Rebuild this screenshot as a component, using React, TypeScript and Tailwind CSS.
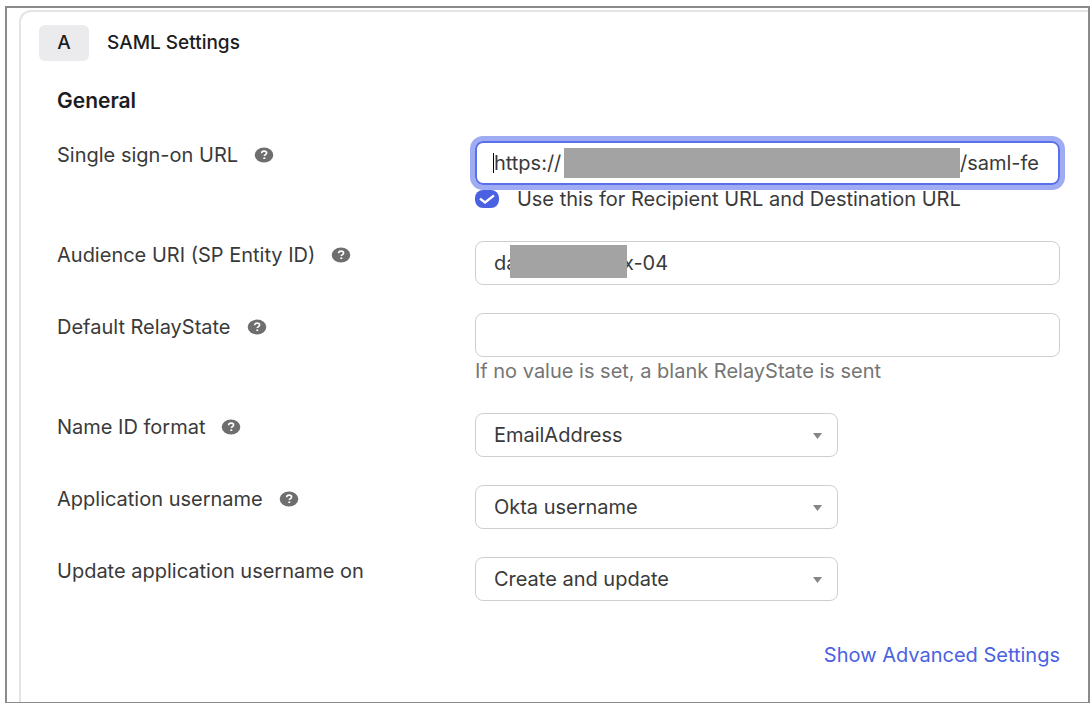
import React from 'react';

type RowProps = {
  id: string;
  label: string;
  help?: boolean;
  children: React.ReactNode;
};

const HelpIcon = () => (
  <svg className="w-5 h-4 shrink-0" viewBox="0 0 20 16" aria-hidden="true">
    <ellipse cx="10" cy="8" rx="9.3" ry="7.4" fill="#6e6e6e" />
    <path
      d="M7.6 6.2C7.7 4.8 8.7 4.1 10.1 4.1c1.5 0 2.5.8 2.5 1.9 0 1.5-2.3 1.6-2.3 3.1"
      fill="none"
      stroke="#fff"
      strokeWidth="1.6"
    />
    <ellipse cx="10.3" cy="11.2" rx="1.1" ry="0.9" fill="#fff" />
  </svg>
);

const Row = ({ id, label, help, children }: RowProps) => (
  <div className="grid grid-cols-[5fr_7fr] items-start">
    <div className="flex items-center gap-4 h-7">
      <label htmlFor={id}>{label}</label>
      {help && (
        <button type="button" aria-label={`Help: ${label}`}>
          <HelpIcon />
        </button>
      )}
    </div>
    <div>{children}</div>
  </div>
);

const Redacted = ({ className }: { className: string }) => (
  <span className={`relative z-10 bg-[#a3a3a3] ${className}`} />
);

const selects = [
  { id: 'name-id', label: 'Name ID format', help: true, value: 'EmailAddress' },
  { id: 'app-username', label: 'Application username', help: true, value: 'Okta username' },
  { id: 'update-on', label: 'Update application username on', help: false, value: 'Create and update' }
];

const App = () => {
  return (
    <main className="min-h-screen flex bg-white pt-[6px] pl-[5px] pr-[2px] font-[Inter,sans-serif] text-xl leading-7 text-[#3a3a3a]">
      <div className="flex-1 flex border-2 border-b border-[#8a8a8a] pt-[2px] pl-3">
        <section className="flex-1 border-t-2 border-l-2 border-[#e4e4e4] rounded-tl-xl pt-[13px] pl-[18px] pr-7">
          <header className="flex items-center gap-[18px] font-medium text-[19px] text-[#1d1d21]">
            <span className="w-[50px] h-9 flex items-center justify-center rounded-md bg-[#ebebed]">A</span>
            <h1>SAML Settings</h1>
          </header>

          <form className="pl-[18px]">
            <h2 className="my-[26px] font-semibold text-[21px] leading-7 text-[#1d1d21]">General</h2>

            <div className="space-y-7">
              <Row id="sso-url" label="Single sign-on URL" help>
                <div className="flex items-center h-11 pl-4 pr-[14px] rounded-lg border-2 border-[#5a70e8] ring-5 ring-[#9fabf3]">
                  <span className="w-px h-5 bg-black" />
                  <input
                    id="sso-url"
                    type="text"
                    defaultValue="https://"
                    className="w-[70px] outline-none"
                  />
                  <Redacted className="flex-1 h-[30px]" />
                  <input
                    type="text"
                    aria-label="Single sign-on URL path"
                    defaultValue="/saml-fe"
                    className="w-[84px] outline-none"
                  />
                </div>
                <div className="flex items-center gap-[18px] h-7">
                  <span className="relative w-6 h-[18px]">
                    <input
                      id="use-recipient"
                      type="checkbox"
                      defaultChecked
                      className="block appearance-none w-6 h-[18px] rounded-lg bg-[#4a62e2]"
                    />
                    <svg className="absolute inset-0 pointer-events-none" viewBox="0 0 24 18" fill="none">
                      <path d="M5 8.6l5 3.9L19 5.4" stroke="#fff" strokeWidth="2.4" />
                    </svg>
                  </span>
                  <label htmlFor="use-recipient" className="whitespace-nowrap">
                    Use this for Recipient URL and Destination URL
                  </label>
                </div>
              </Row>

              <Row id="audience" label="Audience URI (SP Entity ID)" help>
                <div className="flex items-center h-11 px-[18px] rounded-lg border border-[#cfcfcf]">
                  <input id="audience" type="text" defaultValue="da" className="w-6 outline-none" />
                  <Redacted className="-ml-2 -mr-1 mb-1 w-[117px] h-[33px]" />
                  <input
                    type="text"
                    aria-label="Audience URI suffix"
                    defaultValue="x-04"
                    className="flex-1 min-w-0 outline-none"
                  />
                </div>
              </Row>

              <Row id="relay-state" label="Default RelayState" help>
                <input
                  id="relay-state"
                  type="text"
                  className="block w-full h-11 px-[18px] rounded-lg border border-[#cfcfcf]"
                />
                <p className="text-[#757575]">If no value is set, a blank RelayState is sent</p>
              </Row>

              {selects.map((item) => (
                <Row key={item.id} id={item.id} label={item.label} help={item.help}>
                  <div className="relative w-[62%]">
                    <select
                      id={item.id}
                      className="block appearance-none w-full h-11 px-[18px] rounded-lg border border-[#cfcfcf] bg-white"
                    >
                      <option>{item.value}</option>
                    </select>
                    <svg
                      className="absolute right-4 top-5 w-[9px] h-[6px] pointer-events-none"
                      viewBox="0 0 9 6"
                      fill="#858585"
                    >
                      <path d="M0 0h9L4.5 6z" />
                    </svg>
                  </div>
                </Row>
              ))}
            </div>

            <div className="mt-10 text-right">
              <a href="#advanced" className="text-[#4a62e2]">Show Advanced Settings</a>
            </div>
          </form>
        </section>
      </div>
    </main>
  );
};

export default App;
